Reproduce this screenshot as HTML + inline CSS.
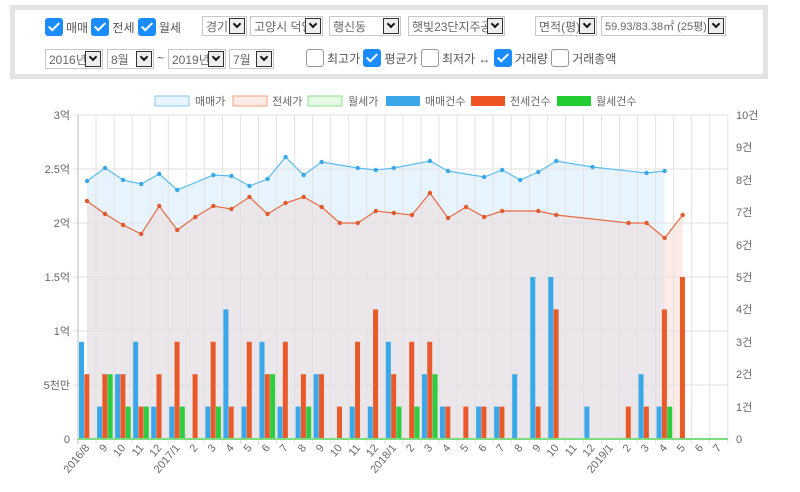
<!DOCTYPE html>
<html><head><meta charset="utf-8">
<style>
body{margin:0;width:800px;height:492px;background:#fff;font-family:"Liberation Sans","Noto Sans CJK KR",sans-serif;overflow:hidden;position:relative}
.panel{position:absolute;left:10px;top:5px;width:748px;height:64px;border:5px solid #e3e3e3;background:#fff}
.it{position:absolute;font-size:12px;color:#555;display:flex;align-items:center}
.cb{width:18px;height:18px;border-radius:3px;background:#1a8cff;display:inline-block;position:relative;margin-right:3px}
.cb:after{content:"";position:absolute;left:6px;top:2px;width:4px;height:9px;border:solid #fff;border-width:0 2.5px 2.5px 0;transform:rotate(45deg)}
.cb.off{background:#fff;border:1px solid #999;width:16px;height:16px}
.cb.off:after{display:none}
.sel{position:absolute;height:20px;border:1px solid #c8c8c8;font-size:12px;color:#666;line-height:20px;padding-left:3px;box-sizing:border-box;overflow:hidden;white-space:nowrap}
.sel b{position:absolute;right:1px;top:1px;width:16px;height:16px;border:1px solid #333;box-sizing:border-box;background:#eee}
.sel b:after{content:"";position:absolute;left:4px;top:2px;width:4px;height:4px;border:solid #111;border-width:0 2px 2px 0;transform:rotate(45deg)}
</style></head><body>
<div class="panel"></div>
<div class="it" style="left:45px;top:18px"><span class="cb"></span>매매&nbsp;<span class="cb"></span>전세&nbsp;<span class="cb"></span>월세</div>
<div class="sel" style="left:202px;top:16px;width:45px">경기<b></b></div>
<div class="sel" style="left:250px;top:16px;width:73px">고양시 덕양<b></b></div>
<div class="sel" style="left:329px;top:16px;width:72px">행신동<b></b></div>
<div class="sel" style="left:408px;top:16px;width:97px">햇빛23단지주공<b></b></div>
<div class="sel" style="left:535px;top:16px;width:62px">면적(평)<b></b></div>
<div class="sel" style="left:601px;top:16px;width:125px;font-size:11px">59.93/83.38㎡ (25평)<b></b></div>
<div class="sel" style="left:45px;top:49px;width:58px">2016년<b></b></div>
<div class="sel" style="left:107px;top:49px;width:47px">8월<b></b></div>
<div class="it" style="left:157px;top:51px">~</div>
<div class="sel" style="left:168px;top:49px;width:58px">2019년<b></b></div>
<div class="sel" style="left:229px;top:49px;width:45px">7월<b></b></div>
<div class="it" style="left:306px;top:49px"><span class="cb off"></span>최고가&nbsp;<span class="cb"></span>평균가&nbsp;<span class="cb off"></span>최저가 ↔&nbsp;<span class="cb"></span>거래량&nbsp;<span class="cb off"></span>거래총액</div>
<svg id="c" width="800" height="492" style="position:absolute;left:0;top:0" font-family="Liberation Sans, Noto Sans CJK KR, sans-serif">
<g font-size="11" fill="#666">
<rect x="155" y="96" width="34" height="10" fill="#e8f4fd" stroke="#8cc8f0"/><text x="195" y="105">매매가</text>
<rect x="233" y="96" width="34" height="10" fill="#fcebe6" stroke="#f0a080"/><text x="272" y="105">전세가</text>
<rect x="308" y="96" width="34" height="10" fill="#e6f8e6" stroke="#8ee08e"/><text x="348" y="105">월세가</text>
<rect x="386" y="96" width="34" height="10" fill="#3aa8e8"/><text x="425" y="105">매매건수</text>
<rect x="471" y="96" width="34" height="10" fill="#ee5522"/><text x="510" y="105">전세건수</text>
<rect x="557" y="96" width="34" height="10" fill="#22cc33"/><text x="596" y="105">월세건수</text>
</g>
<g id="bg"></g>
<g font-size="11" fill="#666" text-anchor="end">
<text x="70" y="119">3억</text><text x="70" y="173">2.5억</text><text x="70" y="227">2억</text><text x="70" y="281">1.5억</text><text x="70" y="335">1억</text><text x="70" y="389">5천만</text><text x="70" y="443">0</text>
</g>
<g font-size="11" fill="#666">
<text x="736" y="119">10건</text><text x="736" y="151">9건</text><text x="736" y="184">8건</text><text x="736" y="216">7건</text><text x="736" y="249">6건</text><text x="736" y="281">5건</text><text x="736" y="313">4건</text><text x="736" y="346">3건</text><text x="736" y="378">2건</text><text x="736" y="411">1건</text><text x="736" y="443">0</text>
</g>
<g id="xl" font-size="11" fill="#666" text-anchor="end">
<text>2016/8</text><text>9</text><text>10</text><text>11</text><text>12</text><text>2017/1</text><text>2</text><text>3</text><text>4</text><text>5</text><text>6</text><text>7</text><text>8</text><text>9</text><text>10</text><text>11</text><text>12</text><text>2018/1</text><text>2</text><text>3</text><text>4</text><text>5</text><text>6</text><text>7</text><text>8</text><text>9</text><text>10</text><text>11</text><text>12</text><text>2019/1</text><text>2</text><text>3</text><text>4</text><text>5</text><text>6</text><text>7</text>
</g>
</svg>
<script>
var NS="http://www.w3.org/2000/svg",g=document.getElementById('bg');
function el(t,a){var e=document.createElementNS(NS,t);for(var k in a)e.setAttribute(k,a[k]);g.appendChild(e);return e}
var X0=78,W=18.05,Y0=439,U=32.4;
function cx(i){return X0+W*i+W/2}
var blue={0:181,1:168,2:180,3:184,4:174,5:190,7:175,8:176,9:186,10:179,11:157,12:175,13:162,15:168,16:170,17:168,19:161,20:171,22:177,23:170,24:180,25:172,26:161,28:167,31:173,32:171};
var ora={0:201,1:214,2:225,3:234,4:206,5:230,6:217,7:206,8:209,9:197,10:214,11:203,12:197,13:207,14:223,15:223,16:211,17:213,18:215,19:193,20:218,21:207,22:217,23:211,25:211,26:215,30:223,31:223,32:238,33:215};
function pts(o){var r=[];for(var k in o)r.push([cx(+k),o[k]]);r.sort(function(a,b){return a[0]-b[0]});return r}
var bp=pts(blue),op=pts(ora);
function poly(p){return p.map(function(q){return q[0].toFixed(1)+','+q[1]}).join(' ')}
function area(p){return poly(p)+' '+p[p.length-1][0].toFixed(1)+','+Y0+' '+p[0][0].toFixed(1)+','+Y0}
el('polygon',{points:area(bp),fill:'#e8f4fd'});
el('polygon',{points:area(op),fill:'#fcebe6'});
var cp=document.createElementNS(NS,'clipPath');cp.id='cl';var r=document.createElementNS(NS,'rect');r.setAttribute('x',0);r.setAttribute('y',0);r.setAttribute('width',cx(32));r.setAttribute('height',492);cp.appendChild(r);g.appendChild(cp);
el('polygon',{points:area(op),fill:'#ebe6ea','clip-path':'url(#cl)'});
for(var i=0;i<=36;i++)el('line',{x1:X0+W*i,x2:X0+W*i,y1:115,y2:444,stroke:'#e2e2e2','stroke-width':1});
for(var j=0;j<=6;j++)el('line',{x1:73,x2:728,y1:115+54*j,y2:115+54*j,stroke:'#e2e2e2'});
el('line',{x1:78,x2:78,y1:115,y2:444,stroke:'#bbb'});
var bars=[[3,2,0],[1,2,2],[2,2,1],[3,1,1],[1,2,0],[1,3,1],[0,2,0],[1,3,1],[4,1,0],[1,3,0],[3,2,2],[1,3,0],[1,2,1],[2,2,0],[0,1,0],[1,3,0],[1,4,0],[3,2,1],[0,3,1],[2,3,2],[1,1,0],[0,1,0],[1,1,0],[1,1,0],[2,0,0],[5,1,0],[5,4,0],[0,0,0],[1,0,0],[0,0,0],[0,1,0],[2,1,0],[1,4,1],[0,5,0],[0,0,0],[0,0,0]];
var cols=['#3aa8e8','#e85a2a','#2ecc40'];
bars.forEach(function(b,i){for(var k=0;k<3;k++){if(b[k])el('rect',{x:X0+W*i+1+k*5.3,y:Y0-b[k]*U,width:5,height:b[k]*U,fill:cols[k]});}});
el('line',{x1:78,x2:728,y1:439,y2:439,stroke:'#7ddc7d','stroke-width':2});
el('polyline',{points:poly(bp),fill:'none',stroke:'#5bbcef','stroke-width':1.2});
el('polyline',{points:poly(op),fill:'none',stroke:'#e86a44','stroke-width':1.2});
bp.forEach(function(p){el('circle',{cx:p[0],cy:p[1],r:2.2,fill:'#3aa8e8'})});
op.forEach(function(p){el('circle',{cx:p[0],cy:p[1],r:2.2,fill:'#e05a2a'})});
var t=document.querySelectorAll('#xl text');
t.forEach(function(e,i){var x=cx(i)+3,y=448;e.setAttribute('x',x);e.setAttribute('y',y);e.setAttribute('transform','rotate(-50 '+x+' '+y+')')});
</script>
</body></html>
